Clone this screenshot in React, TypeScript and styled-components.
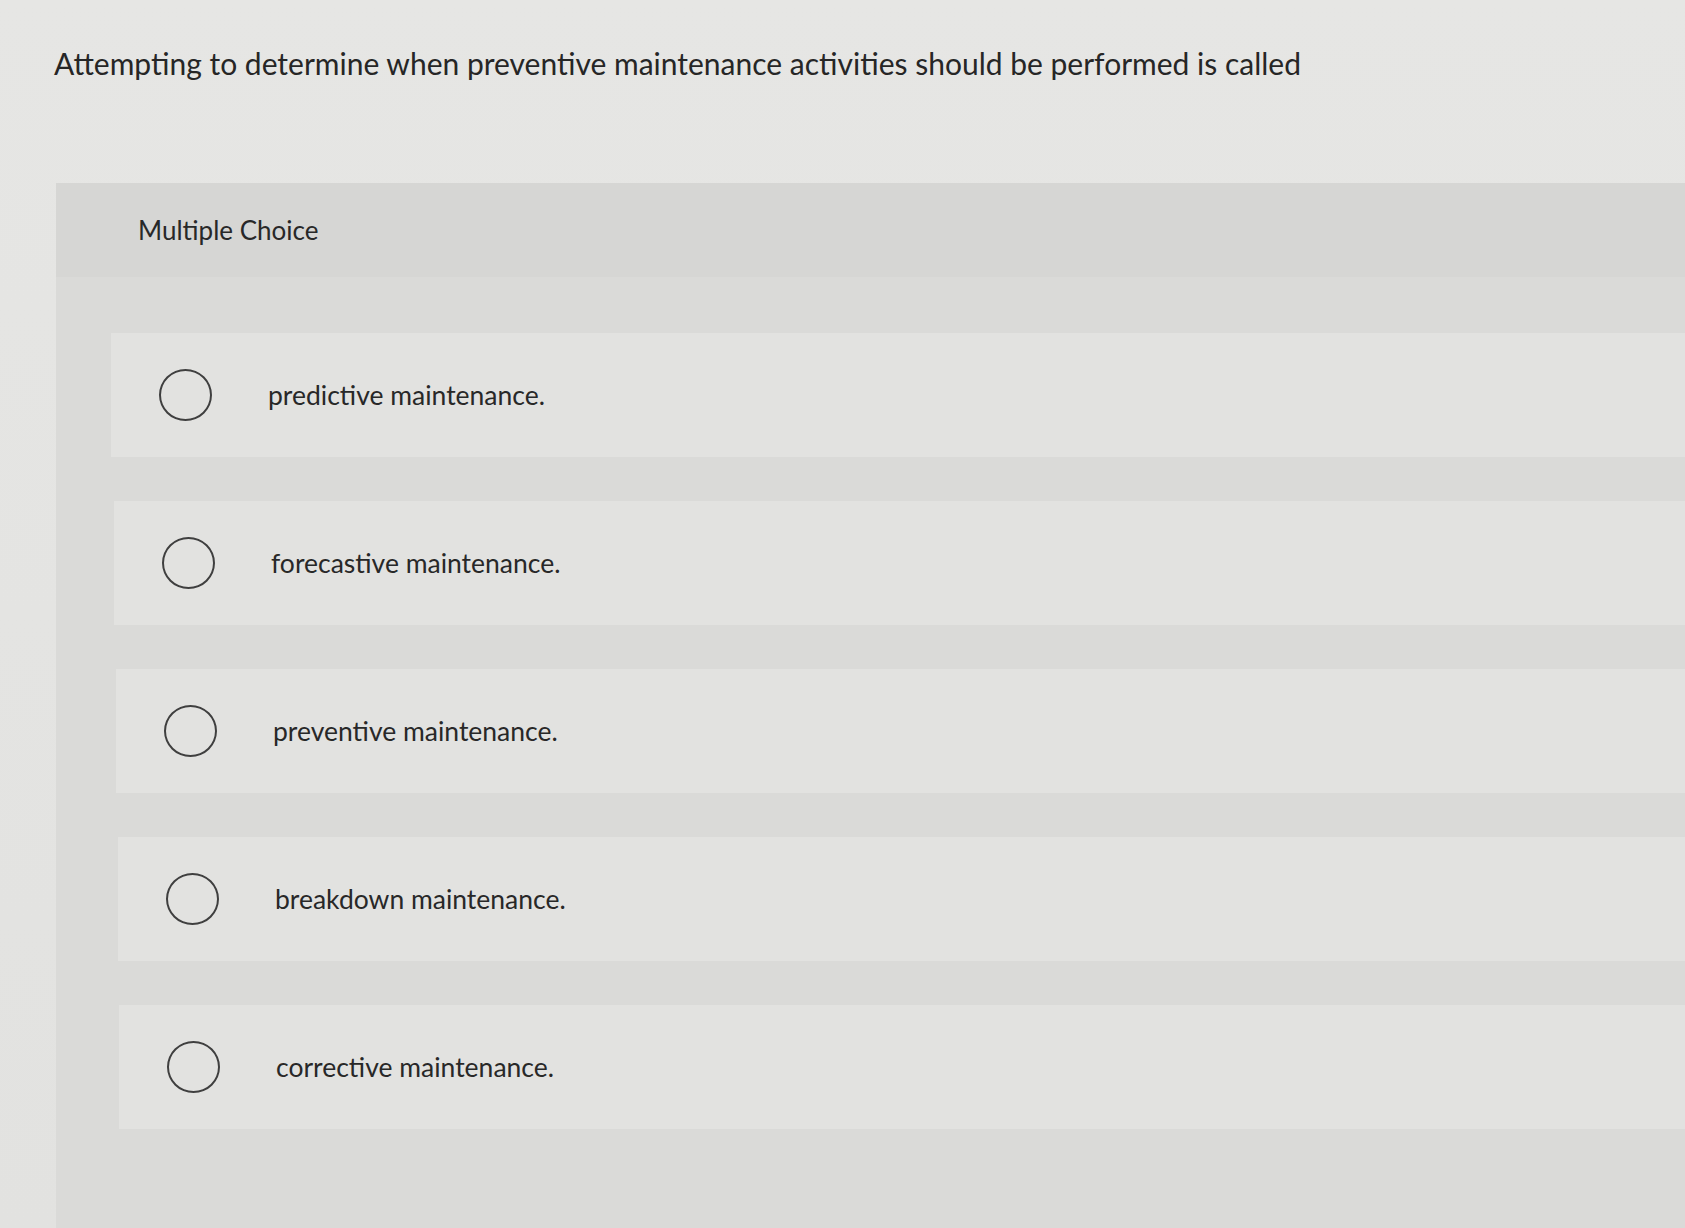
import React from 'react';
import styled, { createGlobalStyle } from 'styled-components';

const GlobalStyle = createGlobalStyle`
  html, body {
    margin: 0;
    padding: 0;
    background: #e4e4e2;
    overflow: hidden;
  }
  body {
    font-family: Lato, 'Open Sans', 'Liberation Sans', sans-serif;
    color: #2b2b2b;
  }
`;

// the photo is slightly skewed, rows drift right going down
const options = [
  { label: 'predictive maintenance.', shift: 0 },
  { label: 'forecastive maintenance.', shift: 3 },
  { label: 'preventive maintenance.', shift: 5 },
  { label: 'breakdown maintenance.', shift: 7 },
  { label: 'corrective maintenance.', shift: 8 },
];

const App: React.FC = () => {
  return (
    <Page>
      <GlobalStyle />
      <Title>
        Attempting to determine when preventive maintenance activities should be performed is called
      </Title>
      <Panel>
        <PanelHeader>Multiple Choice</PanelHeader>
        <OptionList>
          {options.map((opt) => (
            <OptionRow key={opt.label} $shift={opt.shift}>
              <Radio />
              <OptionText>{opt.label}</OptionText>
            </OptionRow>
          ))}
        </OptionList>
      </Panel>
    </Page>
  );
};

const Page = styled.div`
  width: 1685px;
  height: 1228px;
  box-sizing: border-box;
  padding-top: 45px;
  background: linear-gradient(180deg, #e6e6e4 0%, #e2e2e0 100%);
`;

const Title = styled.h1`
  margin: 0 0 0 54px;
  font-size: 30px;
  line-height: 36px;
  font-weight: 400;
  color: #262626;
  white-space: nowrap;
`;

const Panel = styled.section`
  margin: 102px 0 0 56px;
  background: #dadad8;
  height: 1045px;
`;

const PanelHeader = styled.div`
  height: 94px;
  display: flex;
  align-items: center;
  padding-left: 82px;
  background: #d6d6d4;
  font-size: 26px;
  color: #282828;
`;

const OptionList = styled.div`
  display: flex;
  flex-direction: column;
  gap: 44px;
  padding: 56px 0 0 55px;
`;

const OptionRow = styled.div<{ $shift: number }>`
  height: 124px;
  display: flex;
  align-items: center;
  margin-left: ${(p) => p.$shift}px;
  padding-left: 48px;
  background: #e2e2e0;
`;

const Radio = styled.span`
  width: 49px;
  height: 48px;
  border: 2px solid #3f3f3f;
  border-radius: 50%;
  flex-shrink: 0;
`;

const OptionText = styled.span`
  margin-left: 56px;
  font-size: 26.5px;
  color: #282828;
`;

export default App;
